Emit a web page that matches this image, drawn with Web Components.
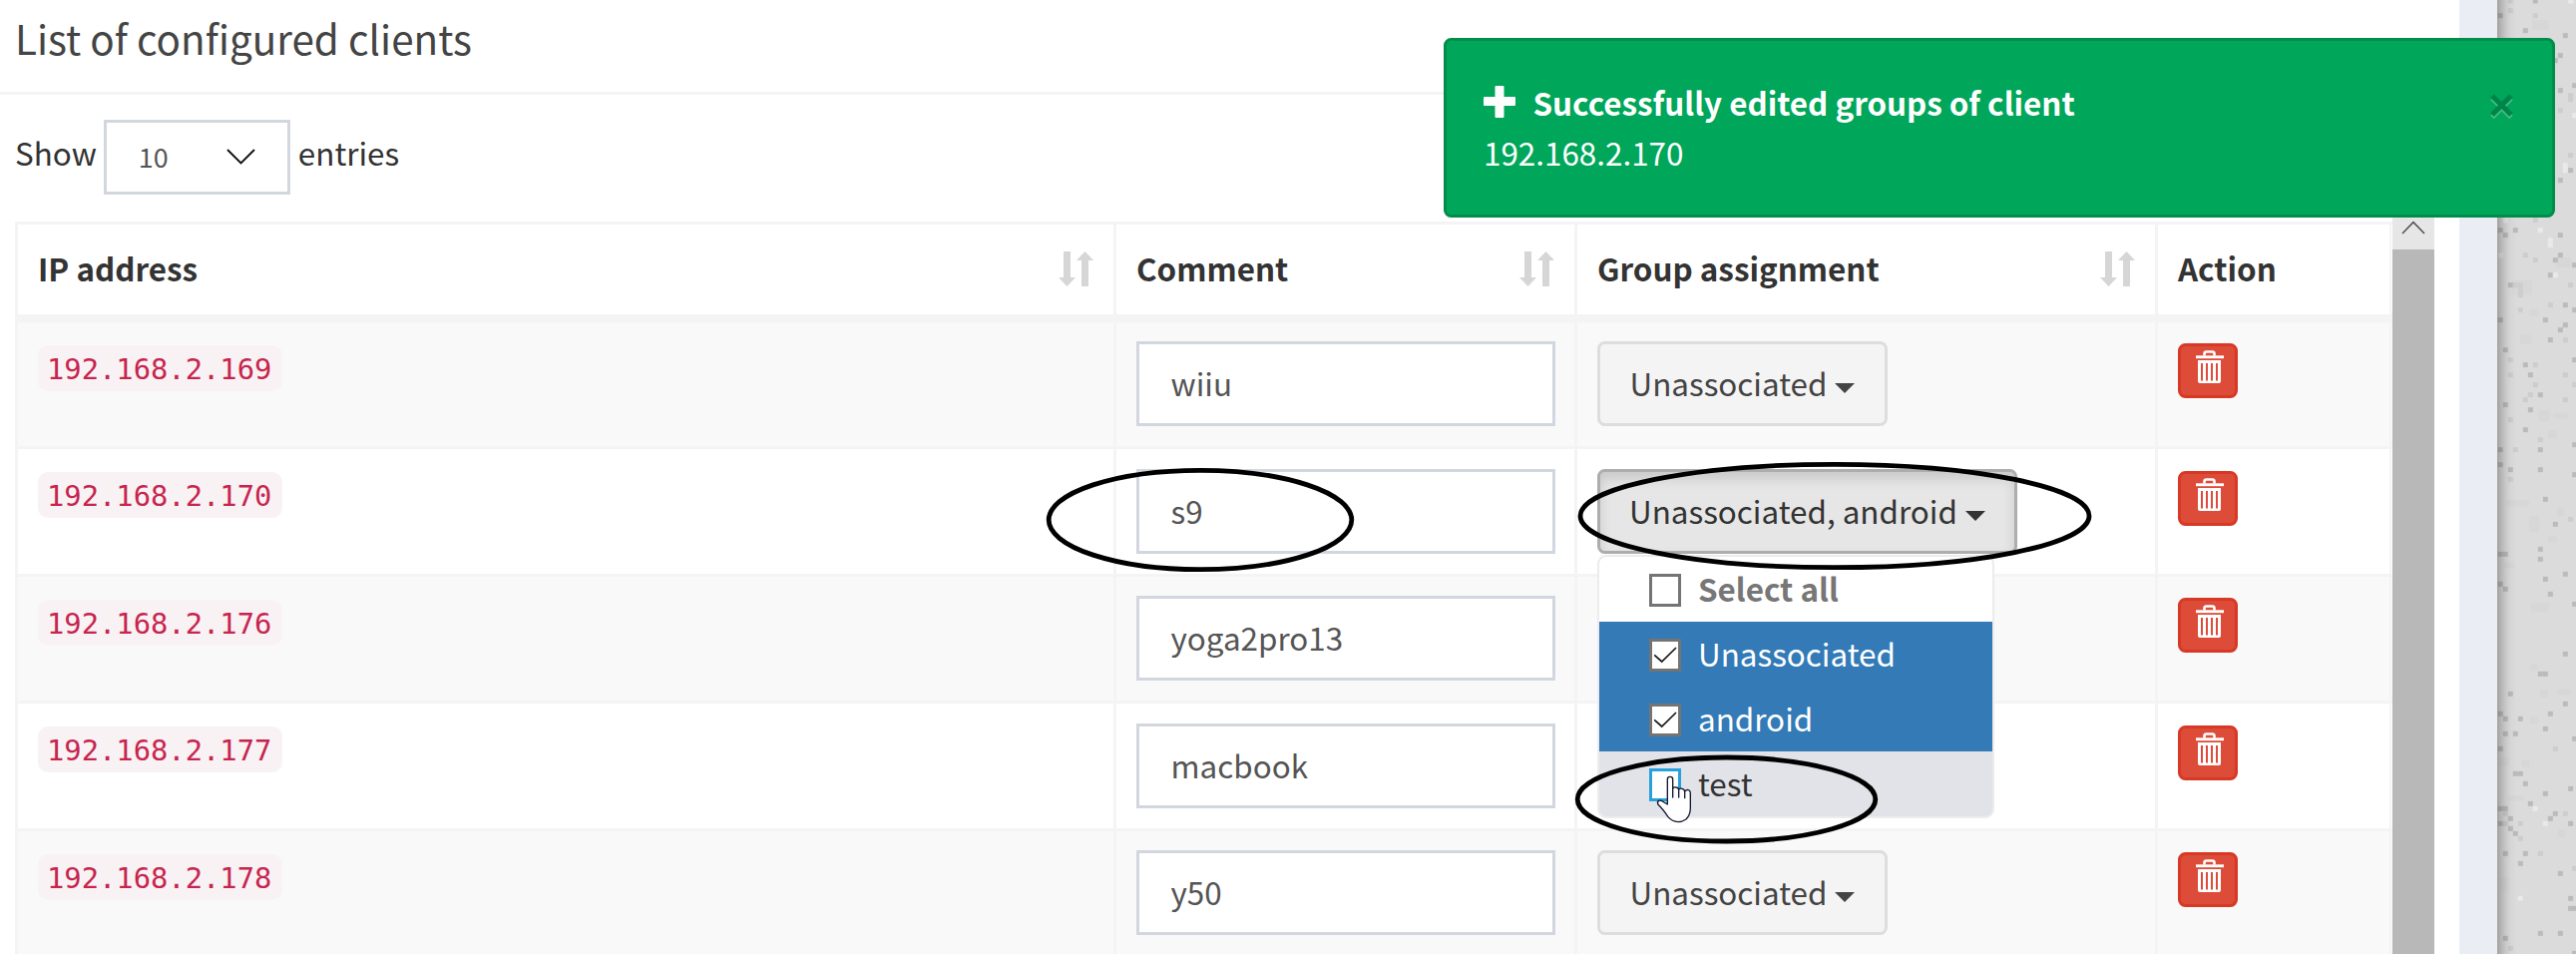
<!DOCTYPE html>
<html lang="en">
<head>
<meta charset="utf-8">
<title>List of configured clients</title>
<style>
  html, body { margin: 0; padding: 0; }
  body {
    width: 2582px; height: 956px; overflow: hidden; background: #fff;
    font-family: "Noto Sans CJK SC", "Noto Sans", sans-serif;
    font-size: 31.4px; line-height: 50px; color: #333;
  }
</style>
</head>
<body>
<client-page>
  <box-title slot="title">List of configured clients</box-title>
  <page-length slot="length" value="10"></page-length>
  <client-table>
    <client-row ip="192.168.2.169" comment="wiiu" groups="Unassociated"></client-row>
    <client-row ip="192.168.2.170" comment="s9" groups="Unassociated, android" open even></client-row>
    <client-row ip="192.168.2.176" comment="yoga2pro13"></client-row>
    <client-row ip="192.168.2.177" comment="macbook" even></client-row>
    <client-row ip="192.168.2.178" comment="y50" groups="Unassociated"></client-row>
  </client-table>
  <texture-strip slot="backdrop"></texture-strip>
  <alert-toast slot="overlay" heading="Successfully edited groups of client">192.168.2.170</alert-toast>
  <ink-marks slot="overlay"></ink-marks>
</client-page>

<script>
const define = (name, render) => customElements.define(name, class extends HTMLElement {
  connectedCallback() {
    if (this.shadowRoot) return;
    this.attachShadow({ mode: 'open' }).innerHTML = render(this);
  }
});

define('client-page', () => `
<style>
  :host { display: flex; position: relative; width: 2582px; height: 956px; overflow: hidden; }
  .box { width: 2465px; height: 956px; background: #fff; overflow: hidden; flex: none; }
  .gutter { width: 38px; background: #eaeef4; flex: none; }
  .scroller { display: flex; margin-left: 15px; }
</style>
<div class="box">
  <slot name="title"></slot>
  <slot name="length"></slot>
  <div class="scroller"><slot></slot><scroll-rail></scroll-rail></div>
</div>
<div class="gutter"></div>
<slot name="backdrop"></slot>
<slot name="overlay"></slot>`);

define('box-title', () => `
<style>
  :host { display: block; box-sizing: border-box; height: 95px; padding: 12px 0 0 15px; line-height: 52px;
    border-bottom: 3px solid #f4f4f4; font-size: 40.4px; color: #444; }
</style><slot></slot>`);

define('page-length', el => `
<style>
  :host { display: flex; align-items: flex-start; box-sizing: border-box; height: 113px; padding: 25px 0 0 15px; }
  .word { line-height: 66px; }
  .select { box-sizing: border-box; display: flex; justify-content: space-between; align-items: flex-start;
    width: 187px; height: 75px; margin: 0 8px 0 7px; border: 3px solid #d2d6de; padding: 0 32px 0 32px;
    font-size: 26.9px; line-height: 67px; color: #555; }
  svg { display: block; margin-top: 25px; }
</style>
<span class="word">Show</span>
<div class="select"><span>${el.getAttribute('value')}</span>
<svg width="29" height="18" viewBox="0 0 29 18"><path d="M1 2L14.5 15.500L28 2" fill="none" stroke="#111" stroke-width="1.9"/></svg></div>
<span class="word">entries</span>`);

define('scroll-rail', () => `
<style>
  :host { display: flex; flex-direction: column; width: 42px; height: 748px; background: #b8b8b8; flex: none; }
  .up { height: 42px; background: #e6e6e6; }
  svg { display: block; }
</style>
<div class="up"><svg width="42" height="42" viewBox="0 0 42 42"><path d="M10 26L21 14.700L32 26" fill="none" stroke="#505050" stroke-width="1.5"/></svg></div>`);

define('sort-icon', () => `
<style>:host { display: block; width: 35px; height: 35px; } svg { display: block; }</style>
<svg width="35" height="35" viewBox="0 0 35 35" fill="#d6d6d6"><path d="M5 0H12V26H17L8.500 35L0 26H5ZM23 35V9H18L26.500 0L35 9H30V35Z"/></svg>`);

define('client-table', () => `
<style>
  :host { display: block; box-sizing: border-box; width: 2383px; margin-top: 14px; border-left: 3px solid #f4f4f4; border-top: 3px solid #f4f4f4; flex: none; }
  .head { display: grid; grid-template-columns: 1101px 462px 582px 235px; height: 98px; box-sizing: border-box; border-bottom: 8px solid #f4f4f4; font-weight: 700; }
  .head div { display: flex; justify-content: space-between; border-right: 3px solid #f4f4f4; padding: 0 20px; line-height: 88px; }
  .head div:last-child { border-right-width: 2px; margin-right: 1px; }
  sort-icon { margin-top: 27px; }
</style>
<div class="head">
  <div>IP address<sort-icon></sort-icon></div>
  <div>Comment<sort-icon></sort-icon></div>
  <div>Group assignment<sort-icon></sort-icon></div>
  <div>Action</div>
</div>
<slot></slot>`);

define('client-row', el => `
<style>
  :host { display: grid; grid-template-columns: 1101px 462px 582px 235px; box-sizing: border-box; height: 127px; border-bottom: 3px solid #f4f4f4; background: #f9f9f9; --top: 19px; }
  :host([even]) { height: 128px; background: #fff; --top: 20px; }
  .cell { box-sizing: border-box; border-right: 3px solid #f4f4f4; padding: var(--top) 20px 0; min-width: 0; }
  .cell:last-child { border-right-width: 2px; margin-right: 1px; }
  code { display: block; box-sizing: border-box; width: 245px; height: 46px; margin-top: calc(23px - var(--top)); padding-left: 9px;
    border-radius: 10px; background: #f9f2f4; color: #c7254e; white-space: nowrap;
    font: 28.8px/48px "DejaVu Sans Mono", monospace; }
  .input { box-sizing: border-box; width: 420px; height: 85px; border: 3px solid #d2d6de; background: #fff; color: #555; padding-left: 31.5px; line-height: 78px; }
</style>
<div class="cell"><code>${el.getAttribute('ip')}</code></div>
<div class="cell"><div class="input">${el.getAttribute('comment')}</div></div>
<div class="cell">${el.hasAttribute('groups') ? `<group-select label="${el.getAttribute('groups')}" ${el.hasAttribute('open') ? 'open' : ''}></group-select>` : ''}</div>
<div class="cell"><trash-button></trash-button></div>`);

define('trash-button', () => `
<style>
  :host { display: block; box-sizing: border-box; width: 60px; height: 55px; margin-top: 1.5px; border: 3px solid #d73925; border-radius: 7.5px; background: #dd4b39; }
  svg { display: block; margin: -3px; }
</style>
<svg width="60" height="55" viewBox="0 0 60 55">
  <path d="M18 12.300H46V15.200H18Z" fill="#fff"/>
  <path d="M26.500 12.500V10.500Q26.500 8.500 28.500 8.500H34.500Q36.500 8.500 36.500 10.500V12.500" fill="none" stroke="#fff" stroke-width="2.600"/>
  <path fill="#fff" fill-rule="evenodd" d="M20 17H43V38Q43 40 41 40H22Q20 40 20 38ZM23 20V37.500H25V20ZM28 20V37.500H30V20ZM33 20V37.500H35V20ZM38 20V37.500H40V20Z"/>
</svg>`);

define('group-select', el => `
<style>
  :host { display: block; position: relative; }
  .btn { box-sizing: border-box; display: flex; width: 291px; height: 85px; border: 3px solid #ddd; border-radius: 7.5px; background: #f4f4f4; color: #444;
    padding-left: 29.5px; line-height: 78px; white-space: nowrap; }
  :host([open]) .btn { width: 421px; margin-left: -.5px; background: #e6e6e6; border-color: #adadad; color: #333; box-shadow: inset 0 7px 12px rgba(0,0,0,.125); }
  .caret { width: 0; height: 0; margin: 39px 0 0 8px; border: 10px solid transparent; border-top-color: currentColor; border-bottom: 0; }
</style>
<div class="btn"><span>${el.getAttribute('label')}</span><i class="caret"></i></div>
${el.hasAttribute('open') ? `<group-menu>
  <menu-option kind="all">Select all</menu-option>
  <menu-option kind="on">Unassociated</menu-option>
  <menu-option kind="on">android</menu-option>
  <menu-option kind="hover">test</menu-option>
</group-menu>` : ''}`);

define('group-menu', () => `
<style>
  :host { position: absolute; z-index: 2; left: 0; top: 86px; width: 394px; background: #fff; border: 2.500px solid #ececec; border-radius: 9px; background-clip: padding-box; }
  .list { overflow: hidden; border-radius: 7px; }
</style><div class="list"><slot></slot></div>`);

define('menu-option', el => {
  const kind = el.getAttribute('kind');
  return `
<style>
  :host { display: flex; height: 65px; padding-left: 50px; line-height: 63px; }
  :host([kind=all]) { color: #777; font-weight: 700; }
  :host([kind=on]) { background: #337ab7; color: #fff; }
  :host([kind=hover]) { background: #e1e3e9; color: #333; }
  .box { box-sizing: border-box; width: 32px; height: 33px; margin: 17px 17px 0 0; border: 3px solid #747474; background: #fff; flex: none; }
  :host([kind=hover]) .box { border-color: #27a0dc; }
  svg { display: block; margin: -3px; }
</style>
<span class="box">${kind === 'on' ? '<svg width="32" height="33" viewBox="0 0 32 33"><path d="M5.200 16.400L12.700 23L27 9" fill="none" stroke="#1a1a1a" stroke-width="1.700"/></svg>' : ''}</span><slot></slot>`;
});

define('alert-toast', el => `
<style>
  :host { display: block; position: absolute; left: 1447px; top: 38px; box-sizing: border-box; width: 1114px; height: 180px; border: 3px solid #008d4c; border-radius: 7.5px;
    background: #00a65a; color: #fff; padding: 37px 37px 0 37px; }
  .line { display: flex; line-height: 50px; }
  .line + div { line-height: 50px; }
  .plus { margin: 8px 17.5px 0 0; }
  b { flex: 1; }
  .close { margin: 16px 2px 0 0; }
  svg { display: block; }
</style>
<div class="line">
  <svg class="plus" width="32" height="32" viewBox="0 0 32 32"><path d="M12.500 0H19.500Q20.500 0 20.500 1V11H31Q32 11 32 12V19Q32 20 31 20H20.500V31Q20.500 32 19.500 32H12.500Q11.500 32 11.500 31V20H1Q0 20 0 19V12Q0 11 1 11H11.500V1Q11.500 0 12.500 0Z" fill="#fff"/></svg>
  <b>${el.getAttribute('heading')}</b>
  <svg class="close" width="23" height="26" viewBox="0 0 23 26" fill="none" stroke-width="5"><path d="M2 4.500L21 23.500M21 4.500L2 23.500" stroke="#44bb82"/><path d="M2 2L21 21M21 2L2 21" stroke="#008548"/></svg>
</div>
<div><slot></slot></div>`);

/* Speckled wallpaper: each speck is the centre of a 5px square, in thirds of a pixel. */
const DARK = [[154,3],[49,47],[244,107],[229,167],[229,272],[124,92],[214,182],[260,512],[229,542],[272,257],[229,707],[214,782],[229,767],[199,827],[272,797],[244,917],[272,932],[184,962],[244,977],[229,992],[199,1022],[49,962],[64,1052],[272,1082],[124,1097],[139,1127],[169,1187],[64,1217],[139,1232],[124,1292],[272,1337],[169,1352],[49,1352],[49,1397],[79,1412],[169,1412],[272,1427],[49,692],[94,692],[64,707],[79,857],
[184,1501],[214,1576],[49,1666],[64,1666],[169,1651],[169,1681],[244,1726],[184,1741],[49,1756],[64,1771],[199,1786],[272,1816],[244,1966],[169,2026],[184,2026],[79,2086],[244,2116],[49,2146],[199,2146],[64,2161],[109,2161],[184,2191],[64,2206],[94,2206],[272,2221],[49,2251],[94,2326],[109,2326],[124,2356],[260,2371],[184,2386],[139,2416],[49,2431],[64,2431],[214,2446],[199,2461],[79,2461],[260,2476],[49,2476],[79,2491],[94,2506],[64,2566],[124,2566],[109,2596],[229,2626],[260,2701],[260,2731],[272,2731],[169,2806],[229,2806],[64,2821],[272,2866]];
const MID = [[79,3],[79,32],[154,47],[260,287],[260,299],[229,332],[260,467],[154,662],[124,767],[154,782],[94,857],[109,857],[109,872],[109,887],[199,917],[109,932],[244,1022],[79,1082],[154,1097],[79,1127],[244,1127],[154,1157],[139,1187],[124,1202],[244,1202],[79,1262],[169,1322],[94,1352],[79,1441],[260,857],[260,1561],[214,2251],[244,2446],[64,2446],[64,2476],[109,2476],[109,2521],[169,2566],[272,2611],[79,2851],[272,1157]];
const PALE = [[260,3],[272,347],[244,497],[244,512],[64,662],[169,692],[199,722],[199,737],[49,767],[214,827],[154,2431],[184,2476],[109,2701]];
const FAINT = [[170,75,50,30],[115,865,60,45],[240,790,45,30],[150,940,30,22],[124,1020,34,28],[180,1250,34,36],[205,1305,26,26],[230,1250,46,16],[100,1512,70,20],[150,1575,30,50],[205,1620,26,22],[230,1540,24,24],[168,1826,55,26],[180,2086,26,24],[75,1700,34,16],[150,2165,26,22],[60,2290,30,26],[125,2295,24,24],[95,2400,50,16],[232,2505,22,24],[240,2080,40,18],[60,2660,26,46],[150,2006,22,20]];
define('texture-strip', () => `
<style>:host { display: block; position: relative; width: 79px; height: 956px; overflow: hidden; background: #dbdbdb; flex: none; } svg { display: block; }
  .shade { position: absolute; inset: 0 auto 0 0; width: 20px; background: linear-gradient(90deg, rgba(0,0,0,.27), rgba(0,0,0,.17) 20%, rgba(0,0,0,.08) 45%, rgba(0,0,0,.025) 70%, transparent); }
</style>
<svg width="79" height="956" viewBox="39 0 237 2868">
${FAINT.map(([x, y, w, h]) => `<rect x="${x - w / 2}" y="${y - h / 2}" width="${w}" height="${h}" rx="6" fill="#d7d7d7"/>`).join('')}
${[[DARK, '#bbb'], [MID, '#cdcdcd'], [PALE, '#e9e9e9']].map(([list, c]) => list.map(([x, y]) => `<rect x="${x - 7.5}" y="${y - 7.5}" width="15" height="15" fill="${c}"/>`).join('')).join('')}
</svg><div class="shade"></div>`);

/* Hand-drawn ellipses and the pointer, floating above the page. */
define('ink-marks', () => `
<style>:host { display: block; position: absolute; inset: 0; z-index: 5; pointer-events: none; } svg { display: block; }</style>
<svg width="2582" height="956" viewBox="0 0 2582 956">
  <g transform="translate(1640 760) scale(.33333)" stroke="#15152c" stroke-width="4" fill="#fff" stroke-linejoin="round" stroke-linecap="round">
    <path d="M94 62Q94 55 102 55Q110 55 110 62V90Q113 86 119 87Q126 87 128 93Q135 88 140 92Q145 94 146 99Q152 93 157 95Q163 97 163 104V150Q163 170 150 183Q138 191 126 191Q108 190 96 176Q80 152 66 139Q62 130 68 127Q75 125 84 132L94 138Z"/>
    <path d="M110 90V117M128 93V117M146 97V119" fill="none"/>
  </g>
  <g fill="none" stroke="#000" stroke-width="4.800">
    <ellipse cx="1203" cy="521" rx="151.800" ry="49.700"/>
    <ellipse cx="1839" cy="517" rx="255" ry="51.700"/>
    <ellipse cx="1730.500" cy="801" rx="149.300" ry="42"/>
  </g>
</svg>`);
</script>
</body>
</html>
